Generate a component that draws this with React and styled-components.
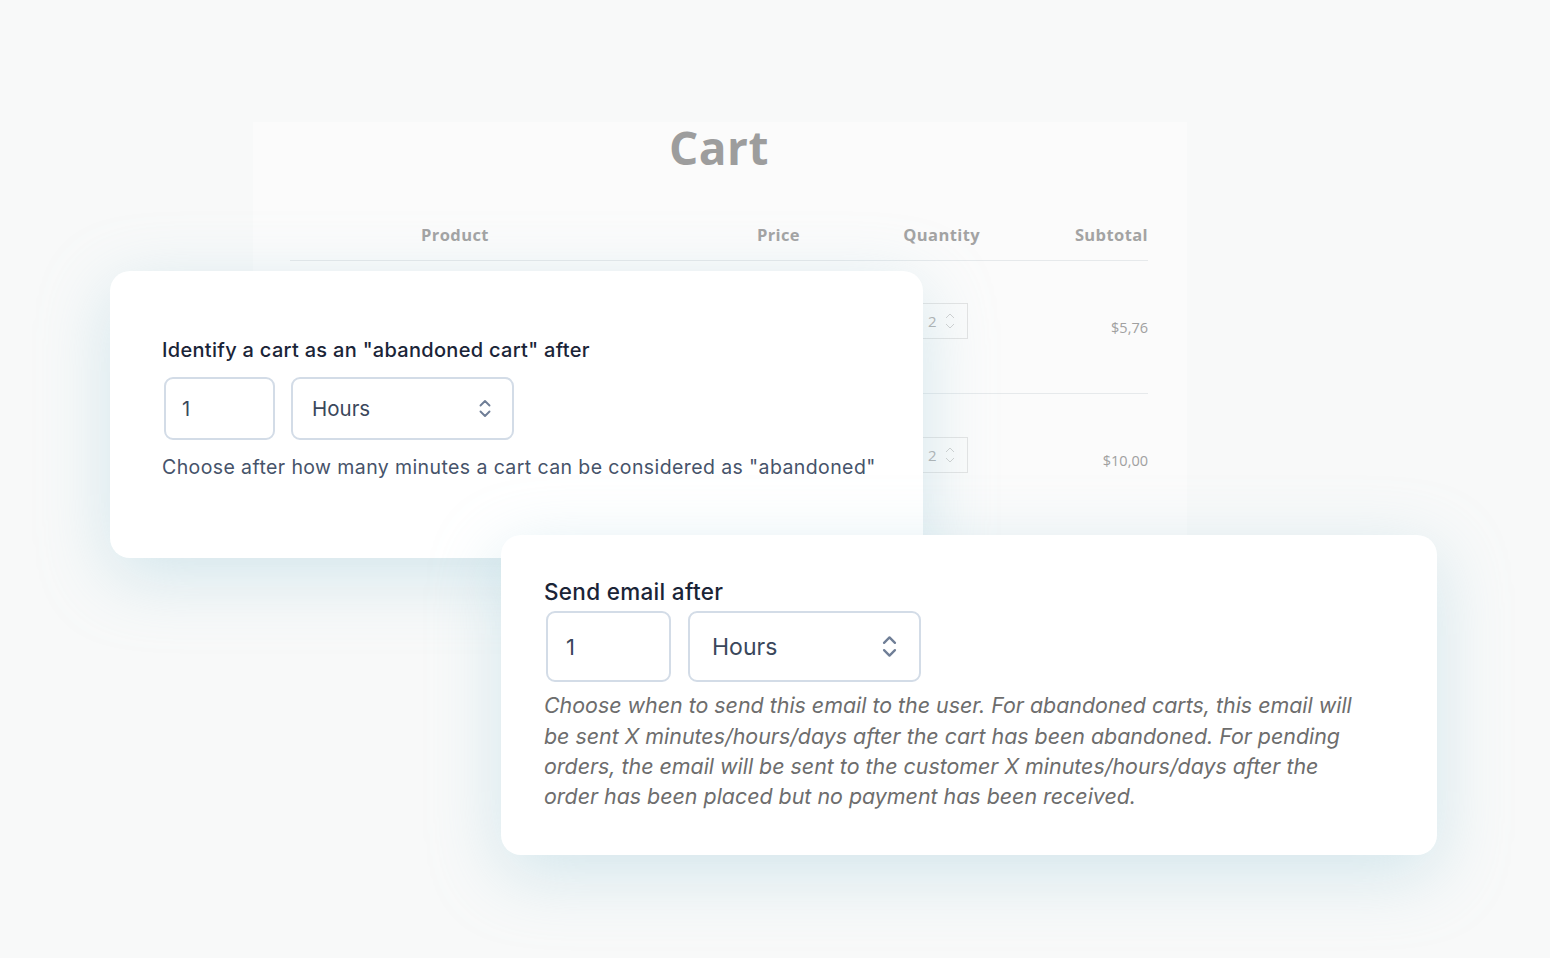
import React from "react";
import styled, { createGlobalStyle } from "styled-components";

const GlobalStyle = createGlobalStyle`
  html, body {
    margin: 0;
    padding: 0;
    background: #f8f9f9;
  }
  * {
    box-sizing: border-box;
  }
`;

const Stage = styled.div`
  position: relative;
  width: 1550px;
  height: 958px;
  overflow: hidden;
  background: #f8f9f9;
  font-family: Inter, "Noto Sans", sans-serif;
`;

const CartPanel = styled.div`
  position: absolute;
  left: 253px;
  top: 122px;
  width: 934px;
  height: 430px;
  background: #fbfbfb;
  padding: 0 39px 0 37px;
  font-family: "Open Sans", "Noto Sans", sans-serif;
`;

const CartTitle = styled.h1`
  margin: 0;
  height: 56px;
  text-align: center;
  font-size: 46px;
  line-height: 50px;
  font-weight: 700;
  color: #9d9d9d;
  letter-spacing: 0.5px;
`;

const TableRow = styled.div`
  display: grid;
  grid-template-columns: 330px 180px 180px 168px;
  align-items: center;
  height: ${(p) => p.$height}px;
  border-bottom: ${(p) => (p.$last ? "none" : "1px solid #e6e9eb")};
`;

const HeadCell = styled.div`
  font-size: 16.5px;
  font-weight: 700;
  color: #a3a3a3;
  letter-spacing: 0.4px;
  text-align: ${(p) => p.$align || "right"};
  padding-top: 30px;
`;

const Cell = styled.div`
  display: flex;
  justify-content: ${(p) => p.$justify || "flex-end"};
  font-size: 14.5px;
  color: #a0a0a0;
`;

const QtyBox = styled.div`
  display: flex;
  align-items: center;
  gap: 8px;
  width: 80px;
  height: 36px;
  margin-right: 12px;
  margin-bottom: 12px;
  padding-left: 39px;
  border: 1px solid #e3e3e3;
  font-size: 15px;
  color: #b0b0b0;
`;

const Card = styled.div`
  position: absolute;
  left: ${(p) => p.$x}px;
  top: ${(p) => p.$y}px;
  width: ${(p) => p.$w}px;
  height: ${(p) => p.$h}px;
  background: #ffffff;
  border-radius: 20px;
  padding: ${(p) => p.$pad};
  box-shadow: 0 18px 70px rgba(150, 200, 215, 0.38);
  display: flex;
  flex-direction: column;
`;

const Label = styled.div`
  font-size: ${(p) => p.$size}px;
  font-weight: 500;
  color: #1a2437;
  line-height: 1.3;
  letter-spacing: 0.3px;
`;

const Fields = styled.div`
  display: flex;
  gap: ${(p) => p.$gap}px;
  margin: ${(p) => p.$margin};
`;

const NumberField = styled.div`
  display: flex;
  align-items: center;
  width: ${(p) => p.$w}px;
  height: ${(p) => p.$h}px;
  padding-left: ${(p) => p.$pl}px;
  border: 2px solid #d3dce7;
  border-radius: 9px;
  font-size: ${(p) => p.$size}px;
  color: #3a475b;
`;

const SelectField = styled(NumberField)`
  justify-content: space-between;
  padding-right: ${(p) => p.$pr}px;
`;

const Help = styled.p`
  margin: 0;
  max-width: ${(p) => p.$max || 2000}px;
  font-size: ${(p) => p.$size}px;
  line-height: ${(p) => p.$lh}px;
  letter-spacing: ${(p) => p.$ls || 0}px;
  color: ${(p) => p.$color};
  font-style: ${(p) => (p.$italic ? "italic" : "normal")};
  white-space: ${(p) => (p.$nowrap ? "nowrap" : "normal")};
`;

function Chevrons({ w = 12, h = 19, color = "#6f7e96" }) {
  return (
    <svg width={w} height={h} viewBox="0 0 12 19" fill="none">
      <path d="M1.5 6.5 L6 2 L10.5 6.5" stroke={color} strokeWidth="1.9" strokeLinecap="round" strokeLinejoin="round" />
      <path d="M1.5 12.5 L6 17 L10.5 12.5" stroke={color} strokeWidth="1.9" strokeLinecap="round" strokeLinejoin="round" />
    </svg>
  );
}

function Stepper() {
  return (
    <svg width="10" height="16" viewBox="0 0 10 16" fill="none">
      <path d="M1 5 L5 1 L9 5" stroke="#d0d0d0" strokeWidth="1" />
      <path d="M1 11 L5 15 L9 11" stroke="#d0d0d0" strokeWidth="1" />
    </svg>
  );
}

const rows = [
  { qty: 2, total: "$5,76" },
  { qty: 2, total: "$10,00" },
];

export default function App() {
  return (
    <>
      <GlobalStyle />
      <Stage>
        <CartPanel>
          <CartTitle>Cart</CartTitle>
          <TableRow $height={83}>
            <HeadCell $align="center">Product</HeadCell>
            <HeadCell>Price</HeadCell>
            <HeadCell>Quantity</HeadCell>
            <HeadCell>Subtotal</HeadCell>
          </TableRow>
          {rows.map((r, i) => (
            <TableRow key={i} $height={133} $last={i === rows.length - 1}>
              <Cell />
              <Cell />
              <Cell>
                <QtyBox>
                  {r.qty}
                  <Stepper />
                </QtyBox>
              </Cell>
              <Cell>{r.total}</Cell>
            </TableRow>
          ))}
        </CartPanel>

        <Card $x={110} $y={271} $w={813} $h={287} $pad="66px 52px">
          <Label $size={20}>Identify a cart as an "abandoned cart" after</Label>
          <Fields $gap={16} $margin="14px 0 14px 2px">
            <NumberField $w={111} $h={63} $pl={16} $size={20}>1</NumberField>
            <SelectField $w={223} $h={63} $pl={19} $pr={21} $size={20.5}>
              Hours
              <Chevrons w={12} h={19} />
            </SelectField>
          </Fields>
          <Help $size={19.5} $lh={26} $ls={0.4} $color="#46536a" $nowrap>
            Choose after how many minutes a cart can be considered as "abandoned"
          </Help>
        </Card>

        <Card $x={501} $y={535} $w={936} $h={320} $pad="42px 43px">
          <Label $size={22.5}>Send email after</Label>
          <Fields $gap={17} $margin="5px 0 8px 2px">
            <NumberField $w={125} $h={71} $pl={18} $size={22}>1</NumberField>
            <SelectField $w={233} $h={71} $pl={22} $pr={22} $size={23}>
              Hours
              <Chevrons w={15} h={23} />
            </SelectField>
          </Fields>
          <Help $size={21.4} $lh={30.4} $max={818} $color="#6d6d6d" $italic>
            Choose when to send this email to the user. For abandoned carts, this email will
            be sent X minutes/hours/days after the cart has been abandoned. For pending
            orders, the email will be sent to the customer X minutes/hours/days after the
            order has been placed but no payment has been received.
          </Help>
        </Card>
      </Stage>
    </>
  );
}
